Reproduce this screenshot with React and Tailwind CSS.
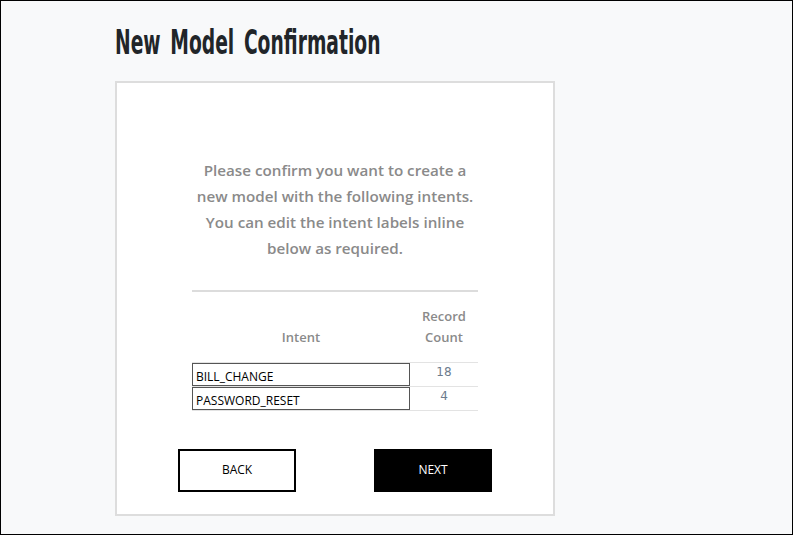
import React from 'react';

const intents = [
  { label: 'BILL_CHANGE', count: 18 },
  { label: 'PASSWORD_RESET', count: 4 },
];

const App = () => {
  return (
    <div className="w-[793px] h-[535px] border border-black bg-[#f8f9fa] font-['Open_Sans',sans-serif] overflow-hidden">
      <div className="ml-[114px] w-[440px]">
        <h1 className="mt-[22px] h-[58px] text-[33px] leading-[40px] font-bold text-[#212529] font-['DejaVu_Sans_Condensed',sans-serif] origin-left scale-x-[0.63] [word-spacing:5px] whitespace-nowrap">
          New Model Confirmation
        </h1>

        <div className="bg-white border-2 border-[#dddddd] pt-[74px] pb-[22px]">
          <p className="text-center text-[15.2px] leading-[26px] font-semibold text-[#8a8a8a]">
            Please confirm you want to create a<br />
            new model with the following intents.<br />
            You can edit the intent labels inline<br />
            below as required.
          </p>

          <div className="w-[286px] mx-auto mt-[29px] border-t-2 border-[#dcdcdc]">
            <table className="w-full border-collapse">
              <thead>
                <tr className="h-[70px]">
                  <th className="w-[218px] align-bottom pb-[14px] text-[13px] leading-[21px] font-semibold text-[#8a8a8a]">
                    Intent
                  </th>
                  <th className="align-bottom pb-[14px] text-[13px] leading-[21px] font-semibold text-[#8a8a8a]">
                    Record
                    <br />
                    Count
                  </th>
                </tr>
              </thead>
              <tbody>
                {intents.map((row) => (
                  <tr key={row.label} className="h-[24px] border-t border-[#e3e3e3] border-b">
                    <td className="p-0 align-top">
                      <input
                        defaultValue={row.label}
                        className="block w-full h-[23px] border border-[#555] px-[3px] pt-[4px] text-[12px] leading-[16px] text-black outline-none bg-white"
                      />
                    </td>
                    <td className="p-0 align-top text-center text-[12px] leading-[18px] text-[#6c7b8d] font-['DejaVu_Sans',sans-serif]">
                      {row.count}
                    </td>
                  </tr>
                ))}
              </tbody>
            </table>
          </div>

          <div className="flex justify-between px-[61px] mt-[38px]">
            <button className="w-[118px] h-[43px] border-2 border-black bg-white text-[12px] text-black">
              BACK
            </button>
            <button className="w-[118px] h-[43px] bg-black text-[12px] text-white">
              NEXT
            </button>
          </div>
        </div>
      </div>
    </div>
  );
};

export default App;
